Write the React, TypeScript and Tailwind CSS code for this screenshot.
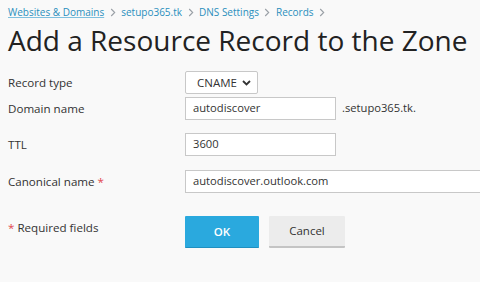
const FONT = { fontFamily: '"Open Sans", "Noto Sans", sans-serif' };

const Chevron = () => (
  <svg width="6" height="9" viewBox="0 0 6 9" className="mx-[5.5px] text-[#9aa0a6]">
    <path d="M1.2 1 L4.7 4.5 L1.2 8" fill="none" stroke="currentColor" strokeWidth="1.1" />
  </svg>
);

const crumbs = ["Websites & Domains", "setupo365.tk", "DNS Settings", "Records"];

export default function App() {
  return (
    <div className="min-h-screen bg-[#f9f9f9] text-[#333]" style={FONT}>
      <div className="px-2 pt-[4px]">
        <nav className="flex items-center h-[16px] text-[10px] text-[#2a8fbd]">
          {crumbs.map((c, i) => (
            <span key={c} className="flex items-center">
              <a className={i === 0 ? "underline decoration-[#7fc0de]" : ""}>{c}</a>
              <Chevron />
            </span>
          ))}
        </nav>
        <h1 className="mt-[3px] text-[28px] leading-[34px] text-[#222] whitespace-nowrap">
          Add a Resource Record to the Zone
        </h1>

        <div className="mt-[14px]">
          <div className="flex items-center h-[23px]">
            <label className="w-[177px] text-[11.6px]">Record type</label>
            <div className="flex items-center justify-between w-[73px] h-[23px] bg-white border border-[#c8c8c8] rounded-[2px] pl-[11px] pr-[6px] text-[11.5px]">
              CNAME
              <svg width="9" height="6" viewBox="0 0 9 6">
                <path d="M1 1 L4.5 4.5 L8 1" fill="none" stroke="#333" strokeWidth="1.8" />
              </svg>
            </div>
          </div>

          <div className="flex items-center h-[23px] mt-[3px]">
            <label className="w-[177px] text-[11.6px]">Domain name</label>
            <div className="w-[151px] h-[23px] bg-white border border-[#c8c8c8] flex items-center px-[7px] text-[11.2px]">
              autodiscover
            </div>
            <span className="ml-[6px] text-[11.2px]">.setupo365.tk.</span>
          </div>

          <div className="flex items-center h-[23px] mt-[13px]">
            <label className="w-[177px] text-[11.6px]">TTL</label>
            <div className="w-[151px] h-[23px] bg-white border border-[#c8c8c8] flex items-center px-[7px] text-[11.2px]">
              3600
            </div>
          </div>

          <div className="flex items-center h-[23px] mt-[14px]">
            <label className="w-[177px] shrink-0 text-[11.6px]">
              Canonical name <span className="text-[#e2474c]">*</span>
            </label>
            <div className="flex-1 h-[23px] bg-white border border-[#c8c8c8] border-r-0 flex items-center px-[7px] text-[11.2px] -mr-2">
              autodiscover.outlook.com
            </div>
          </div>

          <div className="flex items-start mt-[23px]">
            <div className="w-[177px] text-[11.6px] pt-[3px]">
              <span className="text-[#e2474c]">*</span> Required fields
            </div>
            <button className="w-[74px] h-[32px] bg-[#2aa9de] border-b border-[#1f8fc0] text-white text-[11.5px] font-semibold rounded-[1px]">
              OK
            </button>
            <button className="ml-[10px] w-[76px] h-[32px] bg-[#ececec] border-b-2 border-[#c4c4c4] text-[#333] text-[11.5px] rounded-[1px]">
              Cancel
            </button>
          </div>
        </div>
      </div>
    </div>
  );
}
